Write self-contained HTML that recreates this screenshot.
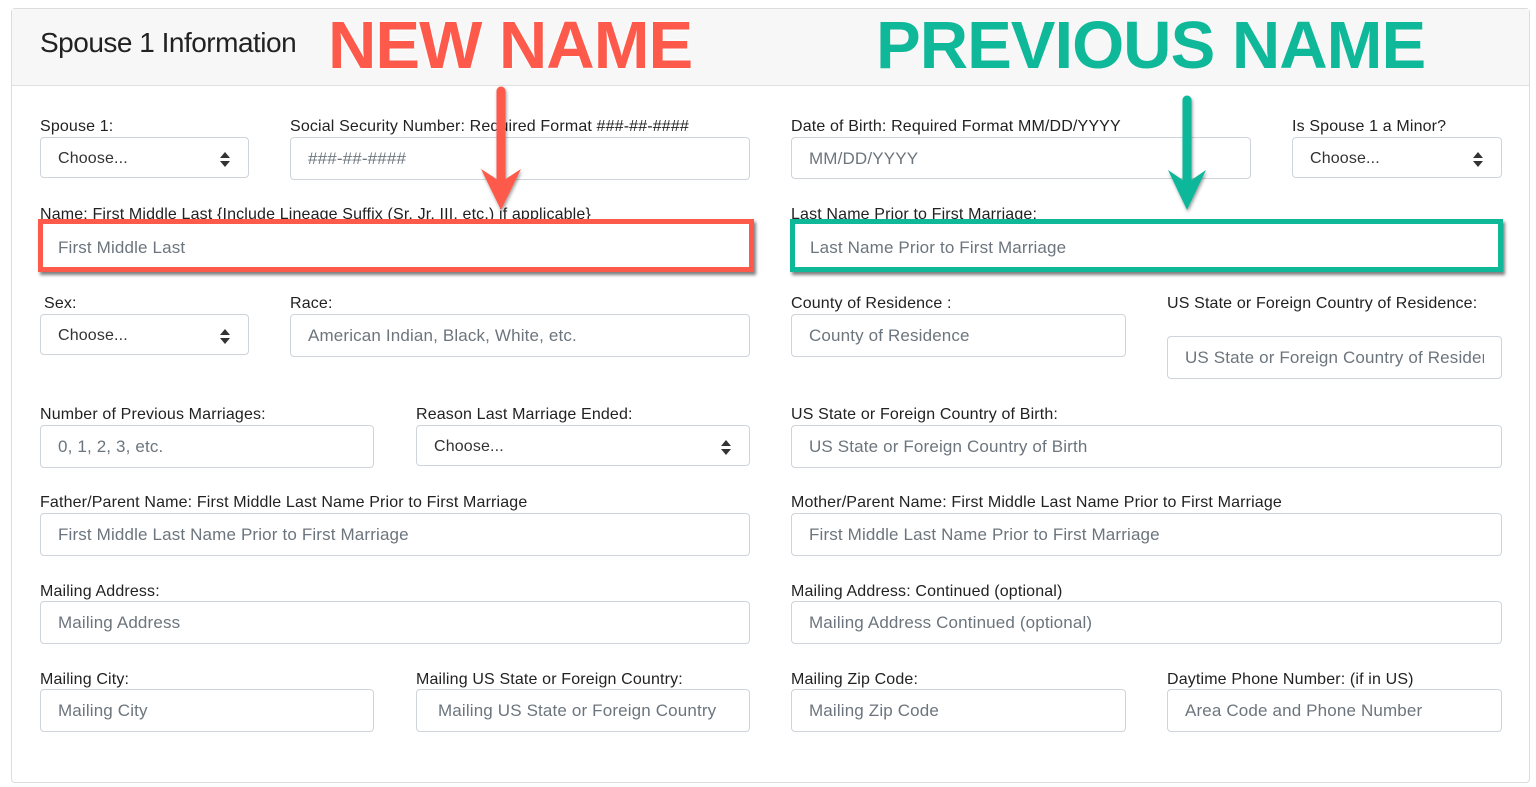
<!DOCTYPE html>
<html><head><meta charset="utf-8"><style>
*{box-sizing:border-box;margin:0;padding:0}
body{width:1536px;height:787px;background:#fff;font-family:"Liberation Sans",Arial,sans-serif;position:relative;overflow:hidden}
.card{position:absolute;left:11px;top:8px;width:1519px;height:775px;border:1px solid #dcdcdc;border-radius:4px}
.hdr{position:absolute;left:12px;top:9px;width:1517px;height:77px;background:#f7f7f7;border-bottom:1px solid #e0e0e0}
.t{position:absolute;left:40px;top:27px;font-size:28px;color:#222;letter-spacing:-0.5px}
.lb{position:absolute;font-size:16px;color:#222;white-space:nowrap;letter-spacing:0.15px;margin-top:1px}
.in{position:absolute;height:43px;border:1px solid #ced4da;border-radius:4px;font-size:17px;color:#6c757d;padding:0 17px;line-height:41px;white-space:nowrap;overflow:hidden;background:#fff;letter-spacing:0.15px}
.in span{display:block;overflow:hidden}
.sel{color:#333;font-size:16px}
.sel:after{content:"";position:absolute;right:18px;top:14px;border:5px solid transparent;border-bottom:6px solid #333;border-top:0}
.sel:before{content:"";position:absolute;right:18px;top:23px;border:5px solid transparent;border-top:6px solid #333;border-bottom:0}
.big{position:absolute;font-weight:bold;font-size:67px;letter-spacing:-1px;white-space:nowrap}
</style></head><body>
<div class="card"></div><div class="hdr"></div>
<div class="t">Spouse 1 Information</div>
<div class="big" style="left:328px;top:7px;color:#fd5a4b;text-shadow:0 0 3px #fff,0 0 3px #fff">NEW NAME</div>
<div class="big" style="left:876px;top:7px;color:#10b89a">PREVIOUS NAME</div>

<div class="lb" style="left:40px;top:117px">Spouse 1:</div>
<div class="lb" style="left:290px;top:117px">Social Security Number: Required Format ###-##-####</div>
<div class="lb" style="left:791px;top:117px">Date of Birth: Required Format MM/DD/YYYY</div>
<div class="lb" style="left:1292px;top:117px">Is Spouse 1 a Minor?</div>
<div class="in sel" style="left:40px;top:137px;width:209px;height:41px">Choose...</div>
<div class="in" style="left:290px;top:137px;width:460px">###-##-####</div>
<div class="in" style="left:791px;top:137px;width:460px;height:42px">MM/DD/YYYY</div>
<div class="in sel" style="left:1292px;top:137px;width:210px;height:41px">Choose...</div>

<div class="lb" style="left:40px;top:205px">Name: First Middle Last {Include Lineage Suffix (Sr, Jr, III, etc.) if applicable}</div>
<div class="lb" style="left:791px;top:205px">Last Name Prior to First Marriage:</div>
<div class="in" style="left:38px;top:219px;width:716px;height:53px;border:5px solid #fd5a4b;border-radius:0;line-height:47px;padding-left:15px;box-shadow:2px 3px 3px rgba(0,0,0,.5)">First Middle Last</div>
<div class="in" style="left:790px;top:219px;width:713px;height:53px;border:5px solid #10b89a;border-radius:0;line-height:47px;padding-left:15px;box-shadow:2px 3px 3px rgba(0,0,0,.5)">Last Name Prior to First Marriage</div>

<div class="lb" style="left:44px;top:294px">Sex:</div>
<div class="lb" style="left:290px;top:294px">Race:</div>
<div class="lb" style="left:791px;top:294px">County of Residence :</div>
<div class="lb" style="left:1167px;top:294px">US State or Foreign Country of Residence:</div>
<div class="in sel" style="left:40px;top:314px;width:209px;height:41px">Choose...</div>
<div class="in" style="left:290px;top:314px;width:460px">American Indian, Black, White, etc.</div>
<div class="in" style="left:791px;top:314px;width:335px">County of Residence</div>
<div class="in" style="left:1167px;top:336px;width:335px"><span>US State or Foreign Country of Residence</span></div>

<div class="lb" style="left:40px;top:405px">Number of Previous Marriages:</div>
<div class="lb" style="left:416px;top:405px">Reason Last Marriage Ended:</div>
<div class="lb" style="left:791px;top:405px">US State or Foreign Country of Birth:</div>
<div class="in" style="left:40px;top:425px;width:334px">0, 1, 2, 3, etc.</div>
<div class="in sel" style="left:416px;top:425px;width:334px;height:41px">Choose...</div>
<div class="in" style="left:791px;top:425px;width:711px">US State or Foreign Country of Birth</div>

<div class="lb" style="left:40px;top:493px">Father/Parent Name: First Middle Last Name Prior to First Marriage</div>
<div class="lb" style="left:791px;top:493px">Mother/Parent Name: First Middle Last Name Prior to First Marriage</div>
<div class="in" style="left:40px;top:513px;width:710px">First Middle Last Name Prior to First Marriage</div>
<div class="in" style="left:791px;top:513px;width:711px">First Middle Last Name Prior to First Marriage</div>

<div class="lb" style="left:40px;top:582px">Mailing Address:</div>
<div class="lb" style="left:791px;top:582px">Mailing Address: Continued (optional)</div>
<div class="in" style="left:40px;top:601px;width:710px">Mailing Address</div>
<div class="in" style="left:791px;top:601px;width:711px">Mailing Address Continued (optional)</div>

<div class="lb" style="left:40px;top:670px">Mailing City:</div>
<div class="lb" style="left:416px;top:670px">Mailing US State or Foreign Country:</div>
<div class="lb" style="left:791px;top:670px">Mailing Zip Code:</div>
<div class="lb" style="left:1167px;top:670px">Daytime Phone Number: (if in US)</div>
<div class="in" style="left:40px;top:689px;width:334px">Mailing City</div>
<div class="in" style="left:416px;top:689px;width:334px;padding-left:21px">Mailing US State or Foreign Country</div>
<div class="in" style="left:791px;top:689px;width:335px">Mailing Zip Code</div>
<div class="in" style="left:1167px;top:689px;width:335px">Area Code and Phone Number</div>

<svg style="position:absolute;left:0;top:0" width="1536" height="787">
<defs><filter id="s"><feDropShadow dx="1" dy="2" stdDeviation="1.5" flood-opacity=".4"/></filter></defs>
<g filter="url(#s)">
<line x1="501" y1="91" x2="501" y2="180" stroke="#fd5a4b" stroke-width="9" stroke-linecap="round"/>
<path d="M481 169 L501 182 L521 169 L501 210 Z" fill="#fd5a4b"/>
<line x1="1187" y1="100" x2="1187" y2="182" stroke="#10b89a" stroke-width="9" stroke-linecap="round"/>
<path d="M1168 170 L1187 183 L1206 170 L1187 210 Z" fill="#10b89a"/>
</g>
</svg>
</body></html>
